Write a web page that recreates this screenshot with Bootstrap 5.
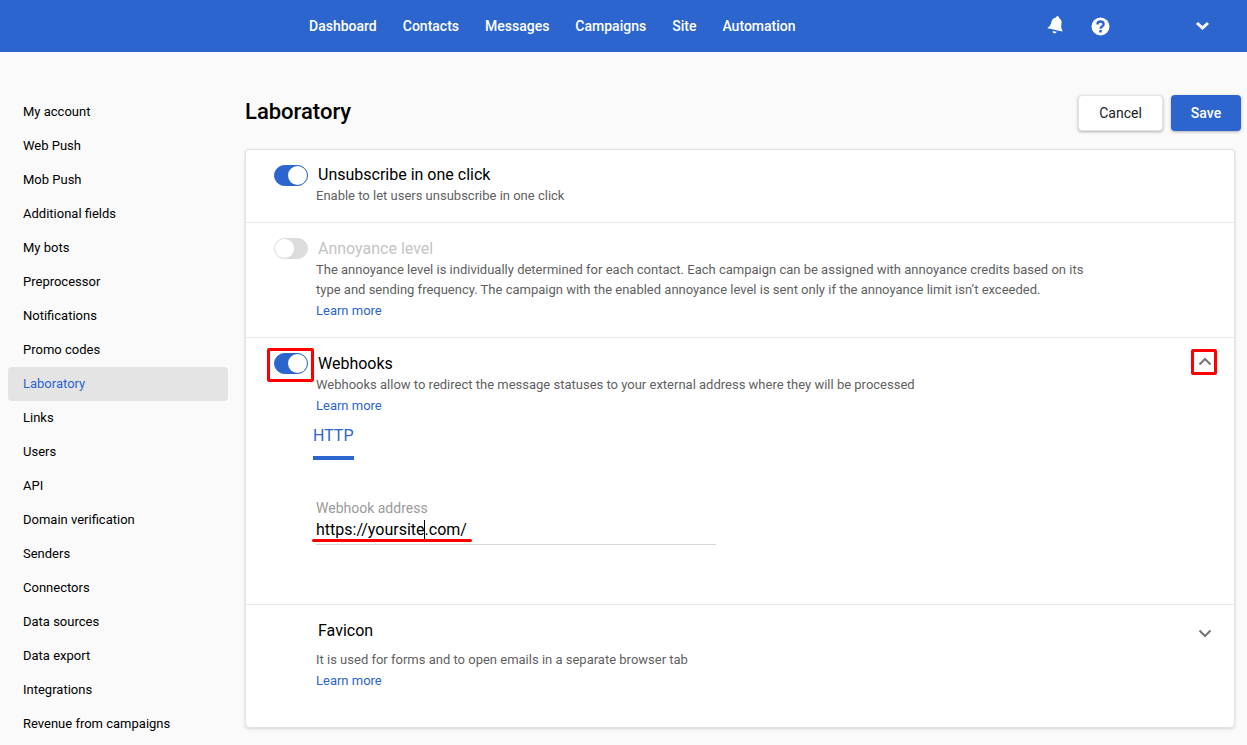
<!DOCTYPE html>
<html lang="en">
<head>
    <meta charset="UTF-8">
    <title>Laboratory</title>
    <link href="https://cdn.jsdelivr.net/npm/bootstrap@5.3.0/dist/css/bootstrap.min.css" rel="stylesheet">
    <style>
        html, body { height: 745px; overflow: hidden; }
        body { background: #fafafa; font-family: Roboto, "Liberation Sans", sans-serif; color: #000; font-size: 14px; }
        .top-bar { height: 52px; background: #2b65cd; padding-left: 296px; }
        .top-link { color: #fff; font-size: 14px; font-weight: 500; text-decoration: none; padding: 0 13px; line-height: 52px; }
        .top-icon { position: absolute; }
        .icon-bell { left: 1046px; top: 15px; }
        .icon-help { left: 1091px; top: 17px; }
        .icon-down { left: 1195px; top: 21px; }
        .page-wrap { height: 693px; }
        .side-menu { width: 245px; flex: none; padding: 43px 0 0 8px; }
        .side-link { display: block; width: 220px; height: 34px; line-height: 34px; padding-left: 15px; color: #000; font-size: 13px; text-decoration: none; border-radius: 4px; }
        .side-link.current { background: #e4e4e4; color: #2b65cd; }
        .main-col { width: 996px; flex: none; }
        .title-row { height: 97px; padding-top: 43px; }
        .page-title { font-size: 22px; font-weight: 500; margin: 0; line-height: 34px; }
        .act-btn { height: 36px; font-size: 14px; font-weight: 500; border-radius: 4px; box-shadow: 0 1px 3px rgba(0,0,0,.3); padding: 0; }
        .act-cancel { width: 85px; background: #fff; color: #222; border: 1px solid #e4e4e4; font-weight: 400; }
        .act-save { width: 70px; background: #2b65cd; color: #fff; border: 0; }
        .lab-card { width: 990px; height: 579px; background: #fff; border: 1px solid #e3e3e3; border-radius: 4px; box-shadow: 0 1px 3px rgba(0,0,0,.15); }
        .lab-row { position: relative; padding-left: 70px; border-bottom: 1px solid #e8e8e8; }
        .lab-row:last-child { border-bottom: 0; }
        .row-one { height: 73px; padding-top: 14px; }
        .row-two { height: 115px; padding-top: 15px; }
        .row-three { height: 267px; padding-top: 15px; }
        .row-four { padding-top: 15px; }
        .lab-name { font-size: 16px; line-height: 22px; margin-left: 2px; }
        .lab-name.off { color: #c4c4c4; }
        .lab-desc { font-size: 13px; line-height: 20px; color: #5f5f5f; width: 770px; }
        .lab-link { display: block; font-size: 13px; line-height: 20px; color: #2b65cd; text-decoration: none; margin-top: 1px; }
        .sw { position: absolute; left: 28px; top: 15px; width: 34px; height: 21px; border-radius: 11px; background: #2b65cd; border: 1px solid #2b65cd; }
        .sw::after { content: ""; position: absolute; right: 0; top: 0; width: 19px; height: 19px; border-radius: 50%; background: #fff; }
        .sw.sw-off { background: #dcdcdc; border-color: #dcdcdc; }
        .sw.sw-off::after { right: auto; left: 0; }
        .tab-http { display: inline-block; margin: 9px 0 0 -3px; font-size: 16px; line-height: 22px; color: #2b65cd; padding-bottom: 9px; border-bottom: 4px solid #2b65cd; }
        .hook-field { width: 400px; margin-top: 38px; border-bottom: 1px solid #d8d8d8; height: 47px; }
        .hook-label { font-size: 14px; line-height: 20px; color: #9a9a9a; }
        .hook-value { font-size: 16px; line-height: 24px; color: #000; }
        .caret-mark { border-left: 1px solid #000; margin-left: -1px; }
        .chev { position: absolute; left: 952px; }
        .mark-box { position: absolute; border: 3px solid #f00; border-radius: 2px; }
        .mark-sw { left: 267px; top: 348px; width: 47px; height: 34px; }
        .mark-chev { left: 1191px; top: 349px; width: 26px; height: 26px; }
        .mark-line { position: absolute; left: 312px; top: 539px; width: 160px; height: 3px; background: #f00; border-radius: 2px; }
    </style>
</head>
<body>
    <div class="top-bar d-flex">
        <a class="top-link" href="#">Dashboard</a>
        <a class="top-link" href="#">Contacts</a>
        <a class="top-link" href="#">Messages</a>
        <a class="top-link" href="#">Campaigns</a>
        <a class="top-link" href="#">Site</a>
        <a class="top-link" href="#">Automation</a>
    </div>
    <svg class="top-icon icon-bell" width="20" height="20" viewBox="0 0 20 20"><g transform="rotate(12 10 10)"><path fill="#fff" d="M10 1c1 0 1.6.7 1.6 1.6 2.4.8 3.6 3 3.6 5.6 0 3 1 4.6 2.3 6v.8H2.500v-.8c1.300-1.400 2.300-3 2.300-6 0-2.600 1.200-4.800 3.600-5.600C8.400 1.700 9 1 10 1z"/><path fill="#fff" d="M8 16.500h4c0 1.200-.9 2-2 2s-2-.8-2-2z"/></g></svg>
    <svg class="top-icon icon-help" width="19" height="19" viewBox="0 0 19 19"><circle cx="9.500" cy="9.500" r="9" fill="#fff"/><path fill="none" stroke="#2b65cd" stroke-width="2.300" d="M6.400 7.400c0-1.900 1.400-2.900 3.100-2.900s3.100 1 3.100 2.700c0 2.400-3.100 2.300-3.100 4.600"/><rect x="8.200" y="13" width="2.600" height="2.500" fill="#2b65cd"/></svg>
    <svg class="top-icon icon-down" width="15" height="10" viewBox="0 0 15 10"><path fill="none" stroke="#fff" stroke-width="3" d="M2 2l5.500 5L13 2"/></svg>

    <div class="page-wrap d-flex">
        <div class="side-menu">
            <a class="side-link" href="#">My account</a>
            <a class="side-link" href="#">Web Push</a>
            <a class="side-link" href="#">Mob Push</a>
            <a class="side-link" href="#">Additional fields</a>
            <a class="side-link" href="#">My bots</a>
            <a class="side-link" href="#">Preprocessor</a>
            <a class="side-link" href="#">Notifications</a>
            <a class="side-link" href="#">Promo codes</a>
            <a class="side-link current" href="#">Laboratory</a>
            <a class="side-link" href="#">Links</a>
            <a class="side-link" href="#">Users</a>
            <a class="side-link" href="#">API</a>
            <a class="side-link" href="#">Domain verification</a>
            <a class="side-link" href="#">Senders</a>
            <a class="side-link" href="#">Connectors</a>
            <a class="side-link" href="#">Data sources</a>
            <a class="side-link" href="#">Data export</a>
            <a class="side-link" href="#">Integrations</a>
            <a class="side-link" href="#">Revenue from campaigns</a>
        </div>
        <div class="main-col">
            <div class="title-row d-flex justify-content-between align-items-start">
                <h1 class="page-title">Laboratory</h1>
                <div class="d-flex gap-2 me-0">
                    <button class="btn act-btn act-cancel">Cancel</button>
                    <button class="btn act-btn act-save">Save</button>
                </div>
            </div>
            <div class="lab-card">
                <div class="lab-row row-one">
                    <span class="sw"></span>
                    <div class="lab-name">Unsubscribe in one click</div>
                    <div class="lab-desc">Enable to let users unsubscribe in one click</div>
                </div>
                <div class="lab-row row-two">
                    <span class="sw sw-off"></span>
                    <div class="lab-name off">Annoyance level</div>
                    <div class="lab-desc">The annoyance level is individually determined for each contact. Each campaign can be assigned with annoyance credits based on its type and sending frequency. The campaign with the enabled annoyance level is sent only if the annoyance limit isn’t exceeded.</div>
                    <a class="lab-link" href="#">Learn more</a>
                </div>
                <div class="lab-row row-three">
                    <span class="sw"></span>
                    <svg class="chev" style="top:19px" width="14" height="9" viewBox="0 0 14 9"><path fill="none" stroke="#757575" stroke-width="2" d="M1.500 7.500L7 2l5.500 5.500"/></svg>
                    <div class="lab-name">Webhooks</div>
                    <div class="lab-desc">Webhooks allow to redirect the message statuses to your external address where they will be processed</div>
                    <a class="lab-link" href="#">Learn more</a>
                    <a class="tab-http" href="#" style="text-decoration:none">HTTP</a>
                    <div class="hook-field">
                        <div class="hook-label">Webhook address</div>
                        <div class="hook-value">https://yoursite<span class="caret-mark"></span>.com/</div>
                    </div>
                </div>
                <div class="lab-row row-four">
                    <svg class="chev" style="top:24px" width="14" height="9" viewBox="0 0 14 9"><path fill="none" stroke="#757575" stroke-width="2" d="M1.500 1.500L7 7l5.500-5.500"/></svg>
                    <div class="lab-name">Favicon</div>
                    <div class="lab-desc mt-2">It is used for forms and to open emails in a separate browser tab</div>
                    <a class="lab-link" href="#">Learn more</a>
                </div>
            </div>
        </div>
    </div>
    <div class="mark-box mark-sw"></div>
    <div class="mark-box mark-chev"></div>
    <div class="mark-line"></div>
    <script src="https://cdn.jsdelivr.net/npm/bootstrap@5.3.0/dist/js/bootstrap.bundle.min.js"></script>
</body>
</html>
